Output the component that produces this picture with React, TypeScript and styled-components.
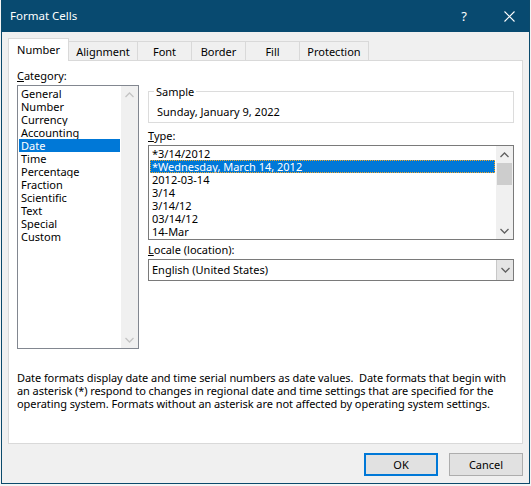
import styled, { createGlobalStyle } from 'styled-components';

const GlobalStyle = createGlobalStyle`
  html, body {
    margin: 0;
    padding: 0;
    background: #f4f4f4;
  }
  body {
    font-family: "Noto Sans", "Open Sans", sans-serif;
    font-size: 11px;
    color: #000;
  }
`;

const categories = [
  'General',
  'Number',
  'Currency',
  'Accounting',
  'Date',
  'Time',
  'Percentage',
  'Fraction',
  'Scientific',
  'Text',
  'Special',
  'Custom',
];

const dateTypes = [
  '*3/14/2012',
  '*Wednesday, March 14, 2012',
  '2012-03-14',
  '3/14',
  '3/14/12',
  '03/14/12',
  '14-Mar',
];

const tabs = [
  { label: 'Number', width: 61 },
  { label: 'Alignment', width: 70 },
  { label: 'Font', width: 55 },
  { label: 'Border', width: 55 },
  { label: 'Fill', width: 55 },
  { label: 'Protection', width: 70 },
];

const Chevron = ({ up, color }: { up?: boolean; color: string }) => (
  <svg width="9" height="6" viewBox="0 0 9 6">
    <polyline
      points={up ? '0.5,5 4.5,1 8.5,5' : '0.5,1 4.5,5 8.5,1'}
      fill="none"
      stroke={color}
      strokeWidth="1.3"
    />
  </svg>
);

export default function App() {
  return (
    <Page>
      <GlobalStyle />
      <Window>
        <TitleBar>
          <Title>Format Cells</Title>
          <HelpButton>?</HelpButton>
          <CloseButton>
            <svg width="11" height="11" viewBox="0 0 11 11">
              <path d="M0.5 0.5 L10.5 10.5 M10.5 0.5 L0.5 10.5" stroke="#fff" strokeWidth="1.1" />
            </svg>
          </CloseButton>
        </TitleBar>

        <Body>
          <TabStrip>
            {tabs.map((t, i) => (
              <Tab key={t.label} $active={i === 0} $width={t.width}>
                {t.label}
              </Tab>
            ))}
          </TabStrip>

          <Panel>
            <Columns>
              <LeftColumn>
                <FieldLabel>
                  <u>C</u>ategory:
                </FieldLabel>
                <CategoryList>
                  <Items>
                    {categories.map((c) => (
                      <CategoryItem key={c} $selected={c === 'Date'}>
                        {c}
                      </CategoryItem>
                    ))}
                  </Items>
                  <ScrollBar>
                    <ArrowBox>
                      <Chevron up color="#c4c4c4" />
                    </ArrowBox>
                    <Track />
                    <ArrowBox>
                      <Chevron color="#c4c4c4" />
                    </ArrowBox>
                  </ScrollBar>
                </CategoryList>
              </LeftColumn>

              <RightColumn>
                <GroupBox>
                  <Legend>Sample</Legend>
                  <SampleValue>Sunday, January 9, 2022</SampleValue>
                </GroupBox>

                <TypeLabel>
                  <u>T</u>ype:
                </TypeLabel>
                <TypeList>
                  <Items>
                    {dateTypes.map((t, i) => (
                      <TypeItem key={t} $selected={i === 1}>
                        {t}
                      </TypeItem>
                    ))}
                  </Items>
                  <ScrollBar>
                    <ArrowBox>
                      <Chevron up color="#606060" />
                    </ArrowBox>
                    <Track>
                      <Thumb />
                    </Track>
                    <ArrowBox>
                      <Chevron color="#606060" />
                    </ArrowBox>
                  </ScrollBar>
                </TypeList>

                <LocaleLabel>
                  <u>L</u>ocale (location):
                </LocaleLabel>
                <Select>
                  <SelectValue>English (United States)</SelectValue>
                  <DropButton>
                    <Chevron color="#606060" />
                  </DropButton>
                </Select>
              </RightColumn>
            </Columns>

            <Description>
              <Line>
                Date formats display date and time serial numbers as date values.&nbsp; Date formats that begin with
              </Line>
              <Line>
                an asterisk (*) respond to changes in regional date and time settings that are specified for the
              </Line>
              <Line>operating system. Formats without an asterisk are not affected by operating system settings.</Line>
            </Description>
          </Panel>

          <Footer>
            <Button $default>OK</Button>
            <Button>Cancel</Button>
          </Footer>
        </Body>
      </Window>
    </Page>
  );
}

const Page = styled.div`
  padding-left: 1px;
`;

const Window = styled.div`
  width: 529px;
  height: 484px;
  box-sizing: border-box;
  border: 1px solid #0b4a6c;
  border-top: none;
  background: #f0f0f0;
  display: flex;
  flex-direction: column;
`;

const TitleBar = styled.div`
  height: 32px;
  background: #084a70;
  color: #fff;
  display: flex;
  align-items: center;
  padding-left: 8px;
`;

const Title = styled.div`
  flex: 1;
  font-size: 11.5px;
  padding-bottom: 1px;
`;

const HelpButton = styled.div`
  width: 24px;
  text-align: center;
  font-size: 13px;
  margin-right: 13px;
`;

const CloseButton = styled.div`
  width: 40px;
  height: 32px;
  display: flex;
  align-items: center;
  justify-content: center;
`;

const Body = styled.div`
  padding: 7px 6px 0 6px;
  display: flex;
  flex-direction: column;
`;

const TabStrip = styled.div`
  display: flex;
  align-items: flex-end;
  height: 22px;
  position: relative;
  z-index: 1;
  margin-bottom: -1px;
`;

const Tab = styled.div<{ $active?: boolean; $width: number }>`
  box-sizing: border-box;
  width: ${(p) => p.$width}px;
  height: ${(p) => (p.$active ? 23 : 20)}px;
  margin-left: ${(p) => (p.$active ? 0 : -1)}px;
  border: 1px solid #d9d9d9;
  border-bottom: ${(p) => (p.$active ? 'none' : '1px solid #d9d9d9')};
  background: ${(p) => (p.$active ? '#fff' : '#f0f0f0')};
  display: flex;
  align-items: center;
  justify-content: center;
  padding-bottom: ${(p) => (p.$active ? 2 : 0)}px;
  &:first-child {
    position: relative;
    z-index: 2;
  }
`;

const Panel = styled.div`
  box-sizing: border-box;
  width: 515px;
  height: 384px;
  background: #fff;
  border: 1px solid #d9d9d9;
  padding: 7px 0 0 8px;
  display: flex;
  flex-direction: column;
`;

const Columns = styled.div`
  display: flex;
  gap: 9px;
`;

const LeftColumn = styled.div`
  display: flex;
  flex-direction: column;
`;

const FieldLabel = styled.div`
  height: 16px;
  line-height: 16px;
  margin-bottom: 1px;
`;

const ListBox = styled.div`
  box-sizing: border-box;
  border: 1px solid #828790;
  background: #fff;
  display: flex;
`;

const CategoryList = styled(ListBox)`
  width: 122px;
  height: 264px;
`;

const Items = styled.div`
  flex: 1;
  padding: 1px 1px 0 1px;
`;

const Item = styled.div<{ $selected?: boolean }>`
  height: 13px;
  line-height: 13px;
  white-space: nowrap;
  overflow: hidden;
  background: ${(p) => (p.$selected ? '#0078d7' : 'transparent')};
  color: ${(p) => (p.$selected ? '#fff' : '#000')};
`;

const CategoryItem = styled(Item)`
  padding-left: 2px;
`;

const TypeItem = styled(Item)`
  padding-left: 2px;
  box-sizing: border-box;
  outline: ${(p) => (p.$selected ? '1px dotted #f5a623' : 'none')};
  outline-offset: -1px;
`;

const ScrollBar = styled.div`
  width: 17px;
  background: #f0f0f0;
  display: flex;
  flex-direction: column;
`;

const ArrowBox = styled.div`
  height: 17px;
  display: flex;
  align-items: center;
  justify-content: center;
`;

const Track = styled.div`
  flex: 1;
`;

const Thumb = styled.div`
  margin: 0 1px;
  height: 22px;
  background: #cdcdcd;
`;

const RightColumn = styled.div`
  width: 366px;
  display: flex;
  flex-direction: column;
  padding-top: 23px;
`;

const GroupBox = styled.div`
  box-sizing: border-box;
  position: relative;
  width: 366px;
  height: 32px;
  border: 1px solid #dcdcdc;
  padding: 13px 0 0 8px;
`;

const Legend = styled.span`
  position: absolute;
  top: -8px;
  left: 5px;
  padding: 0 2px;
  background: #fff;
  line-height: 16px;
`;

const SampleValue = styled.div`
  line-height: 13px;
`;

const TypeLabel = styled.div`
  height: 16px;
  line-height: 16px;
  margin-top: 5px;
  margin-bottom: 1px;
`;

const TypeList = styled(ListBox)`
  width: 366px;
  height: 95px;
  border-color: #7a7a7a;
`;

const LocaleLabel = styled(TypeLabel)`
  margin-top: 2px;
  margin-bottom: 1px;
`;

const Select = styled.div`
  box-sizing: border-box;
  width: 366px;
  height: 22px;
  border: 1px solid #7a7a7a;
  display: flex;
  background: #fff;
`;

const SelectValue = styled.div`
  flex: 1;
  padding-left: 3px;
  line-height: 20px;
`;

const DropButton = styled.div`
  width: 16px;
  background: #e5e5e5;
  border-left: 1px solid #c8c8c8;
  display: flex;
  align-items: center;
  justify-content: center;
`;

const Description = styled.div`
  margin-top: 22px;
  line-height: 13px;
  letter-spacing: -0.07px;
`;

const Line = styled.div`
  white-space: nowrap;
`;

const Footer = styled.div`
  display: flex;
  justify-content: flex-end;
  gap: 11px;
  margin-top: 9px;
  width: 515px;
`;

const Button = styled.button<{ $default?: boolean }>`
  box-sizing: border-box;
  width: 74px;
  height: 23px;
  font-family: inherit;
  font-size: 11px;
  color: #000;
  background: #e1e1e1;
  border: ${(p) => (p.$default ? '2px solid #0078d7' : '1px solid #adadad')};
  padding: 0;
`;
